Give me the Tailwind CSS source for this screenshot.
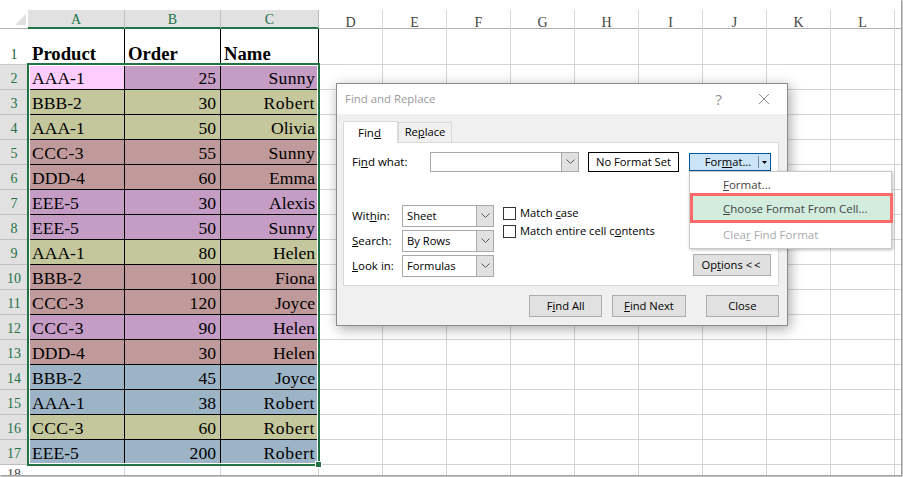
<!DOCTYPE html>
<html>
<head>
<meta charset="utf-8">
<script src="https://cdn.jsdelivr.net/npm/@tailwindcss/browser@4"></script>
</head>
<body>
<div class="relative w-[903px] h-[477px] overflow-hidden bg-white font-['Liberation_Serif',serif]">
  <!-- sheet -->
  <div class="w-[901px] h-[475px] pt-[10px] bg-white overflow-hidden flex shadow-[1px_1px_2px_1px_#a0a0a0]">
    <!-- data part -->
    <div class="w-[319px] shrink-0 text-[17.6px] leading-none text-black">
      <div class="grid grid-cols-[28px_97px_96px_98px] h-[19px] text-[14px] text-[#217346]">
        <div class="relative border-b border-[#b0b0b0]"><div class="absolute left-[15px] top-[4px] w-0 h-0 border-l-[11px] border-l-transparent border-b-[11px] border-b-[#e0e0e0]"></div></div>
        <div class="flex items-center justify-center pt-[2px] bg-[#e1e1e1] border-r border-[#c0c0c0] border-b-2 border-b-[#217346]">A</div>
        <div class="flex items-center justify-center pt-[2px] bg-[#e1e1e1] border-r border-[#c0c0c0] border-b-2 border-b-[#217346]">B</div>
        <div class="flex items-center justify-center pt-[2px] bg-[#e1e1e1] border-r border-[#c0c0c0] border-b-2 border-b-[#217346]">C</div>
      </div>
      <div class="grid grid-cols-[28px_97px_96px_98px] h-[36px] font-bold text-[18.7px]">
        <div class="flex items-end justify-center pb-[2px] border-b border-[#c8c8c8] font-normal text-[14px] text-[#1d5c3a]">1</div>
        <div class="flex items-end pl-[4px] pb-[1px] border-r border-black">Product</div>
        <div class="flex items-end pl-[3px] pb-[1px] border-r border-black">Order</div>
        <div class="flex items-end pl-[3px] pb-[1px] border-r border-black">Name</div>
      </div>
      <div class="grid grid-cols-[28px_97px_96px_98px] h-[25px] [&>div]:pt-[4px]"><div class="flex items-center justify-center bg-[#e1e1e1] border-b border-[#c0c0c0] text-[14px] text-[#217346]">2</div><div class="flex items-center pl-[4px] bg-[#ffccff] border-r border-b border-black">AAA-1</div><div class="flex items-center justify-end pr-[4px] bg-[#c49cc4] border-r border-b border-black">25</div><div class="flex items-center justify-end pr-[3px] bg-[#c49cc4] border-r border-b border-black tracking-[0.3px]">Sunny</div></div>
      <div class="grid grid-cols-[28px_97px_96px_98px] h-[25px] [&>div]:pt-[4px]"><div class="flex items-center justify-center bg-[#e1e1e1] border-b border-[#c0c0c0] text-[14px] text-[#217346]">3</div><div class="flex items-center pl-[4px] bg-[#c4c69c] border-r border-b border-black">BBB-2</div><div class="flex items-center justify-end pr-[4px] bg-[#c4c69c] border-r border-b border-black">30</div><div class="flex items-center justify-end pr-[3px] bg-[#c4c69c] border-r border-b border-black tracking-[0.6px]">Robert</div></div>
      <div class="grid grid-cols-[28px_97px_96px_98px] h-[25px] [&>div]:pt-[4px]"><div class="flex items-center justify-center bg-[#e1e1e1] border-b border-[#c0c0c0] text-[14px] text-[#217346]">4</div><div class="flex items-center pl-[4px] bg-[#c4c69c] border-r border-b border-black">AAA-1</div><div class="flex items-center justify-end pr-[4px] bg-[#c4c69c] border-r border-b border-black">50</div><div class="flex items-center justify-end pr-[3px] bg-[#c4c69c] border-r border-b border-black">Olivia</div></div>
      <div class="grid grid-cols-[28px_97px_96px_98px] h-[25px] [&>div]:pt-[4px]"><div class="flex items-center justify-center bg-[#e1e1e1] border-b border-[#c0c0c0] text-[14px] text-[#217346]">5</div><div class="flex items-center pl-[4px] bg-[#c09a9a] border-r border-b border-black tracking-[0.4px]">CCC-3</div><div class="flex items-center justify-end pr-[4px] bg-[#c09a9a] border-r border-b border-black">55</div><div class="flex items-center justify-end pr-[3px] bg-[#c09a9a] border-r border-b border-black tracking-[0.3px]">Sunny</div></div>
      <div class="grid grid-cols-[28px_97px_96px_98px] h-[25px] [&>div]:pt-[4px]"><div class="flex items-center justify-center bg-[#e1e1e1] border-b border-[#c0c0c0] text-[14px] text-[#217346]">6</div><div class="flex items-center pl-[4px] bg-[#c09a9a] border-r border-b border-black">DDD-4</div><div class="flex items-center justify-end pr-[4px] bg-[#c09a9a] border-r border-b border-black">60</div><div class="flex items-center justify-end pr-[3px] bg-[#c09a9a] border-r border-b border-black">Emma</div></div>
      <div class="grid grid-cols-[28px_97px_96px_98px] h-[25px] [&>div]:pt-[4px]"><div class="flex items-center justify-center bg-[#e1e1e1] border-b border-[#c0c0c0] text-[14px] text-[#217346]">7</div><div class="flex items-center pl-[4px] bg-[#c49cc4] border-r border-b border-black">EEE-5</div><div class="flex items-center justify-end pr-[4px] bg-[#c49cc4] border-r border-b border-black">30</div><div class="flex items-center justify-end pr-[3px] bg-[#c49cc4] border-r border-b border-black">Alexis</div></div>
      <div class="grid grid-cols-[28px_97px_96px_98px] h-[25px] [&>div]:pt-[4px]"><div class="flex items-center justify-center bg-[#e1e1e1] border-b border-[#c0c0c0] text-[14px] text-[#217346]">8</div><div class="flex items-center pl-[4px] bg-[#c49cc4] border-r border-b border-black">EEE-5</div><div class="flex items-center justify-end pr-[4px] bg-[#c49cc4] border-r border-b border-black">50</div><div class="flex items-center justify-end pr-[3px] bg-[#c49cc4] border-r border-b border-black tracking-[0.3px]">Sunny</div></div>
      <div class="grid grid-cols-[28px_97px_96px_98px] h-[25px] [&>div]:pt-[4px]"><div class="flex items-center justify-center bg-[#e1e1e1] border-b border-[#c0c0c0] text-[14px] text-[#217346]">9</div><div class="flex items-center pl-[4px] bg-[#c4c69c] border-r border-b border-black">AAA-1</div><div class="flex items-center justify-end pr-[4px] bg-[#c4c69c] border-r border-b border-black">80</div><div class="flex items-center justify-end pr-[3px] bg-[#c4c69c] border-r border-b border-black">Helen</div></div>
      <div class="grid grid-cols-[28px_97px_96px_98px] h-[25px] [&>div]:pt-[4px]"><div class="flex items-center justify-center bg-[#e1e1e1] border-b border-[#c0c0c0] text-[14px] text-[#217346]">10</div><div class="flex items-center pl-[4px] bg-[#c09a9a] border-r border-b border-black">BBB-2</div><div class="flex items-center justify-end pr-[4px] bg-[#c09a9a] border-r border-b border-black">100</div><div class="flex items-center justify-end pr-[3px] bg-[#c09a9a] border-r border-b border-black">Fiona</div></div>
      <div class="grid grid-cols-[28px_97px_96px_98px] h-[25px] [&>div]:pt-[4px]"><div class="flex items-center justify-center bg-[#e1e1e1] border-b border-[#c0c0c0] text-[14px] text-[#217346]">11</div><div class="flex items-center pl-[4px] bg-[#c09a9a] border-r border-b border-black tracking-[0.4px]">CCC-3</div><div class="flex items-center justify-end pr-[4px] bg-[#c09a9a] border-r border-b border-black">120</div><div class="flex items-center justify-end pr-[3px] bg-[#c09a9a] border-r border-b border-black">Joyce</div></div>
      <div class="grid grid-cols-[28px_97px_96px_98px] h-[25px] [&>div]:pt-[4px]"><div class="flex items-center justify-center bg-[#e1e1e1] border-b border-[#c0c0c0] text-[14px] text-[#217346]">12</div><div class="flex items-center pl-[4px] bg-[#c49cc4] border-r border-b border-black tracking-[0.4px]">CCC-3</div><div class="flex items-center justify-end pr-[4px] bg-[#c49cc4] border-r border-b border-black">90</div><div class="flex items-center justify-end pr-[3px] bg-[#c49cc4] border-r border-b border-black">Helen</div></div>
      <div class="grid grid-cols-[28px_97px_96px_98px] h-[25px] [&>div]:pt-[4px]"><div class="flex items-center justify-center bg-[#e1e1e1] border-b border-[#c0c0c0] text-[14px] text-[#217346]">13</div><div class="flex items-center pl-[4px] bg-[#c09a9a] border-r border-b border-black">DDD-4</div><div class="flex items-center justify-end pr-[4px] bg-[#c09a9a] border-r border-b border-black">30</div><div class="flex items-center justify-end pr-[3px] bg-[#c09a9a] border-r border-b border-black">Helen</div></div>
      <div class="grid grid-cols-[28px_97px_96px_98px] h-[25px] [&>div]:pt-[4px]"><div class="flex items-center justify-center bg-[#e1e1e1] border-b border-[#c0c0c0] text-[14px] text-[#217346]">14</div><div class="flex items-center pl-[4px] bg-[#9cb4c6] border-r border-b border-black">BBB-2</div><div class="flex items-center justify-end pr-[4px] bg-[#9cb4c6] border-r border-b border-black">45</div><div class="flex items-center justify-end pr-[3px] bg-[#9cb4c6] border-r border-b border-black">Joyce</div></div>
      <div class="grid grid-cols-[28px_97px_96px_98px] h-[25px] [&>div]:pt-[4px]"><div class="flex items-center justify-center bg-[#e1e1e1] border-b border-[#c0c0c0] text-[14px] text-[#217346]">15</div><div class="flex items-center pl-[4px] bg-[#9cb4c6] border-r border-b border-black">AAA-1</div><div class="flex items-center justify-end pr-[4px] bg-[#9cb4c6] border-r border-b border-black">38</div><div class="flex items-center justify-end pr-[3px] bg-[#9cb4c6] border-r border-b border-black tracking-[0.6px]">Robert</div></div>
      <div class="grid grid-cols-[28px_97px_96px_98px] h-[25px] [&>div]:pt-[4px]"><div class="flex items-center justify-center bg-[#e1e1e1] border-b border-[#c0c0c0] text-[14px] text-[#217346]">16</div><div class="flex items-center pl-[4px] bg-[#c4c69c] border-r border-b border-black tracking-[0.4px]">CCC-3</div><div class="flex items-center justify-end pr-[4px] bg-[#c4c69c] border-r border-b border-black">60</div><div class="flex items-center justify-end pr-[3px] bg-[#c4c69c] border-r border-b border-black tracking-[0.6px]">Robert</div></div>
      <div class="grid grid-cols-[28px_97px_96px_98px] h-[25px] [&>div]:pt-[4px]"><div class="flex items-center justify-center bg-[#e1e1e1] border-b border-[#c0c0c0] text-[14px] text-[#217346]">17</div><div class="flex items-center pl-[4px] bg-[#9cb4c6] border-r border-b border-black">EEE-5</div><div class="flex items-center justify-end pr-[4px] bg-[#9cb4c6] border-r border-b border-black">200</div><div class="flex items-center justify-end pr-[3px] bg-[#9cb4c6] border-r border-b border-black tracking-[0.6px]">Robert</div></div>
      <div class="grid grid-cols-[28px_97px_96px_98px] h-[25px]"><div class="flex items-center justify-center pb-[5px] text-[14px] text-[#444]">18</div><div class="border-r border-[#d4d4d4]"></div><div class="border-r border-[#d4d4d4]"></div><div class="border-r border-[#d4d4d4]"></div></div>
    </div>
    <!-- blank part -->
    <div class="flex-1 min-w-0">
      <div class="grid grid-cols-[repeat(9,64px)] h-[19px] border-b border-[#b0b0b0] text-[14px] text-[#444] [&>div]:pt-[2px]">
        <div class="flex items-center justify-center border-r border-[#d8d8d8]">D</div>
        <div class="flex items-center justify-center border-r border-[#d8d8d8]">E</div>
        <div class="flex items-center justify-center border-r border-[#d8d8d8]">F</div>
        <div class="flex items-center justify-center border-r border-[#d8d8d8]">G</div>
        <div class="flex items-center justify-center border-r border-[#d8d8d8]">H</div>
        <div class="flex items-center justify-center border-r border-[#d8d8d8]">I</div>
        <div class="flex items-center justify-center border-r border-[#d8d8d8]">J</div>
        <div class="flex items-center justify-center border-r border-[#d8d8d8]">K</div>
        <div class="flex items-center justify-center border-r border-[#d8d8d8]">L</div>
      </div>
      <div class="h-[450px] bg-[linear-gradient(to_left,#d4d4d4_1px,transparent_1px)] bg-[length:64px_100%]">
        <div class="h-[36px] border-b border-[#d4d4d4]"></div>
        <div class="h-[25px] border-b border-[#d4d4d4]"></div>
        <div class="h-[25px] border-b border-[#d4d4d4]"></div>
        <div class="h-[25px] border-b border-[#d4d4d4]"></div>
        <div class="h-[25px] border-b border-[#d4d4d4]"></div>
        <div class="h-[25px] border-b border-[#d4d4d4]"></div>
        <div class="h-[25px] border-b border-[#d4d4d4]"></div>
        <div class="h-[25px] border-b border-[#d4d4d4]"></div>
        <div class="h-[25px] border-b border-[#d4d4d4]"></div>
        <div class="h-[25px] border-b border-[#d4d4d4]"></div>
        <div class="h-[25px] border-b border-[#d4d4d4]"></div>
        <div class="h-[25px] border-b border-[#d4d4d4]"></div>
        <div class="h-[25px] border-b border-[#d4d4d4]"></div>
        <div class="h-[25px] border-b border-[#d4d4d4]"></div>
        <div class="h-[25px] border-b border-[#d4d4d4]"></div>
        <div class="h-[25px] border-b border-[#d4d4d4]"></div>
        <div class="h-[25px] border-b border-[#d4d4d4]"></div>
      </div>
    </div>
  </div>

  <!-- selection frame -->
  <div class="absolute left-[27px] top-[63px] w-[293px] h-[403px] border-2 border-[#217346] shadow-[inset_0_0_0_1px_#ffffff]"></div>
  <div class="absolute left-[315px] top-[461px] w-[7px] h-[7px] bg-[#217346] border border-white"></div>

  <!-- dialog -->
  <div class="absolute left-[336px] top-[83px] w-[452px] h-[243px] flex flex-col bg-[#f0f0f0] border border-[#8c8c8c] shadow-[2px_3px_12px_rgba(0,0,0,0.35)] font-['Open_Sans',sans-serif] text-[11.2px] text-black">
    <div class="h-[30px] shrink-0 bg-white flex items-center pl-[8px] pr-[17px] text-[11.4px] text-[#9a9a9a]">
      <span>Find and Replace</span>
      <span class="ml-auto text-[15px] text-[#8c8c8c]">?</span>
      <svg class="ml-[36px]" width="12" height="12" viewBox="0 0 12 12" fill="none" stroke="#8c8c8c" stroke-width="1"><path d="M1 1L11 11M11 1L1 11"/></svg>
    </div>
    <div class="flex-1 pl-[6px] pr-[8px] pt-[7px]">
      <div class="flex items-end h-[22px] relative z-10">
        <div class="h-[22px] w-[55px] pr-[2px] bg-white border border-b-0 border-[#d9d9d9] flex items-center justify-center text-[11.5px]"><span>Fin<span class="underline">d</span></span></div>
        <div class="h-[20px] w-[54px] mb-[1px] bg-[#f0f0f0] border border-b-0 border-[#d9d9d9] flex items-center justify-center"><span>Re<span class="underline">p</span>lace</span></div>
      </div>
      <div class="h-[144px] -mt-[1px] bg-white border border-[#d9d9d9] pt-[9px] pl-[8px] pr-[7px]">
        <div class="flex items-start">
          <div class="w-[78px] h-[20px] flex items-center text-[11.5px]"><span>Fi<span class="underline">n</span>d what:</span></div>
          <div class="w-[149px] h-[20px] flex justify-end border border-[#a9a9a9]">
            <div class="w-[17px] flex items-center justify-center bg-[#e1e1e1] border-l border-[#a9a9a9]"><svg width="9" height="6" viewBox="0 0 9 6" fill="none" stroke="#555" stroke-width="1"><path d="M0.5 0.5L4.5 4.5L8.5 0.5"/></svg></div>
          </div>
          <div class="ml-[9px] w-[91px] h-[20px] flex items-center justify-center border border-black">No Format Set</div>
          <div class="ml-[10px] mt-[1px] w-[82px] h-[18px] flex items-center bg-[#cce4f7] border border-[#005499]">
            <span class="flex-1 pl-[8px] text-center">For<span class="underline">m</span>at...</span>
            <span class="h-[12px] border-l border-[#7c8c99]"></span>
            <svg class="mx-[3px]" width="5" height="3" viewBox="0 0 5 3" fill="#000"><path d="M0 0H5L2.5 3Z"/></svg>
          </div>
        </div>
        <div class="flex justify-between items-end mt-[33px]">
          <div class="flex">
            <div class="flex flex-col gap-[3px]">
              <div class="flex items-center">
                <div class="w-[50px] text-[11.5px]">Wit<span class="underline">h</span>in:</div>
                <div class="w-[92px] h-[22px] flex items-center border border-[#a9a9a9]"><span class="flex-1 pl-[4px]">Sheet</span><div class="w-[17px] h-full flex items-center justify-center bg-[#e1e1e1] border-l border-[#a9a9a9]"><svg width="9" height="6" viewBox="0 0 9 6" fill="none" stroke="#555" stroke-width="1"><path d="M0.5 0.5L4.5 4.5L8.5 0.5"/></svg></div></div>
              </div>
              <div class="flex items-center">
                <div class="w-[50px] text-[11.5px]"><span class="underline">S</span>earch:</div>
                <div class="w-[92px] h-[22px] flex items-center border border-[#a9a9a9]"><span class="flex-1 pl-[4px]">By Rows</span><div class="w-[17px] h-full flex items-center justify-center bg-[#e1e1e1] border-l border-[#a9a9a9]"><svg width="9" height="6" viewBox="0 0 9 6" fill="none" stroke="#555" stroke-width="1"><path d="M0.5 0.5L4.5 4.5L8.5 0.5"/></svg></div></div>
              </div>
              <div class="flex items-center">
                <div class="w-[50px] text-[11.5px]"><span class="underline">L</span>ook in:</div>
                <div class="w-[92px] h-[22px] flex items-center border border-[#a9a9a9]"><span class="flex-1 pl-[4px]">Formulas</span><div class="w-[17px] h-full flex items-center justify-center bg-[#e1e1e1] border-l border-[#a9a9a9]"><svg width="9" height="6" viewBox="0 0 9 6" fill="none" stroke="#555" stroke-width="1"><path d="M0.5 0.5L4.5 4.5L8.5 0.5"/></svg></div></div>
              </div>
            </div>
            <div class="ml-[9px] pt-[2px] flex flex-col gap-[5px]">
              <div class="flex items-center gap-[4px] h-[13px]"><div class="w-[13px] h-[13px] border border-[#333]"></div><span>Match <span class="underline">c</span>ase</span></div>
              <div class="flex items-center gap-[4px] h-[13px]"><div class="w-[13px] h-[13px] border border-[#333]"></div><span>Match entire cell c<span class="underline">o</span>ntents</span></div>
            </div>
          </div>
          <div class="w-[78px] h-[22px] mb-[1px] flex items-center justify-center bg-[#e1e1e1] border border-[#adadad]"><span>Op<span class="underline">t</span>ions <span class="tracking-[2px]">&lt;&lt;</span></span></div>
        </div>
      </div>
      <div class="flex mt-[9px] ml-[186px]">
        <div class="w-[74px] h-[22px] flex items-center justify-center bg-[#e1e1e1] border border-[#adadad]"><span>F<span class="underline">i</span>nd All</span></div>
        <div class="ml-[10px] w-[74px] h-[22px] flex items-center justify-center bg-[#e1e1e1] border border-[#adadad]"><span><span class="underline">F</span>ind Next</span></div>
        <div class="ml-[20px] w-[74px] h-[22px] flex items-center justify-center bg-[#e1e1e1] border border-[#adadad]">Close</div>
      </div>
    </div>
  </div>

  <!-- dropdown menu -->
  <div class="absolute left-[689px] top-[171px] w-[203px] h-[78px] bg-white border border-[#c8c8c8] shadow-[1px_1px_3px_rgba(0,0,0,0.25)] font-['Open_Sans',sans-serif] text-[11.5px] text-[#444]">
    <div class="h-[21px] pt-[4px] pl-[33px] flex items-center"><span><span class="underline">F</span>ormat...</span></div>
    <div class="h-[30px] -mr-[2px] pt-[2px] pl-[30px] flex items-center bg-[#d2ecde] border-[3px] border-[#ff6b6b]"><span><span class="underline">C</span>hoose Format From Cell...</span></div>
    <div class="h-[24px] pl-[33px] flex items-center text-[#a9a9a9]"><span>Clea<span class="underline">r</span> Find Format</span></div>
  </div>
</div>
</body>
</html>
